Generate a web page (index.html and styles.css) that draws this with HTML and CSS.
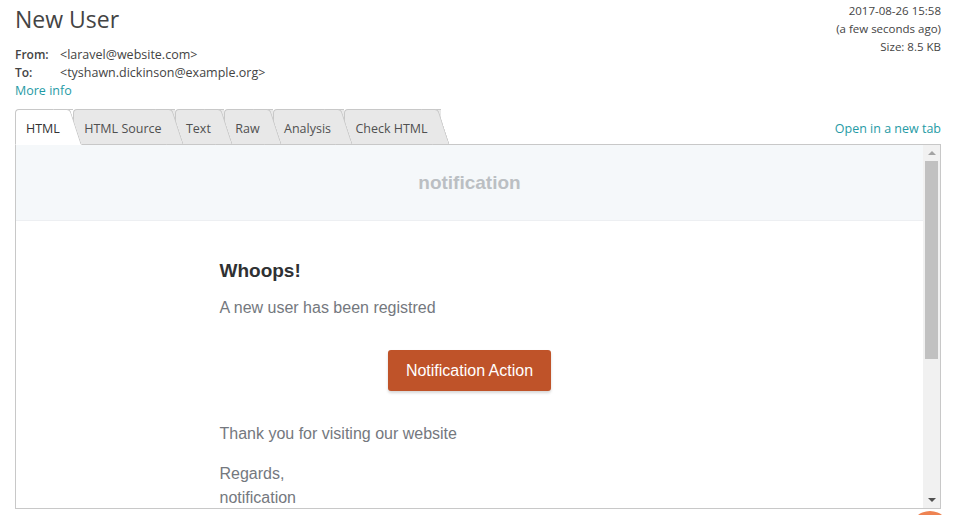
FILE: index.html
```html
<!DOCTYPE html>
<html>
<head>
<meta charset="utf-8">
<link rel="stylesheet" href="styles.css">
</head>
<body>
<div class="page">
  <div class="top">
    <div class="summary">
      <h1 class="title">New User</h1>
      <div class="meta">
        <span class="label">From:</span><span class="value">&lt;laravel@website.com&gt;</span>
        <span class="label">To:</span><span class="value">&lt;tyshawn.dickinson@example.org&gt;</span>
      </div>
      <a class="link" href="#">More info</a>
    </div>
    <div class="stamp">
      <div>2017-08-26 15:58</div>
      <div>(a few seconds ago)</div>
      <div>Size: 8.5 KB</div>
    </div>
  </div>

  <div class="tabbar">
    <div class="tabs">
      <div class="tab active">HTML</div>
      <div class="tab">HTML Source</div>
      <div class="tab">Text</div>
      <div class="tab">Raw</div>
      <div class="tab">Analysis</div>
      <div class="tab">Check HTML</div>
    </div>
    <a class="link newtab" href="#">Open in a new tab</a>
  </div>

  <div class="panel">
    <div class="frame">
      <div class="masthead">notification</div>
      <div class="mailbody">
        <div class="inner">
          <h2 class="whoops">Whoops!</h2>
          <p class="para">A new user has been registred</p>
          <div class="action"><span class="button">Notification Action</span></div>
          <p class="para">Thank you for visiting our website</p>
          <p class="para">Regards,<br>notification</p>
        </div>
      </div>
    </div>
    <div class="scrollbar">
      <div class="sb-btn"><span class="arrow-up"></span></div>
      <div class="sb-thumb"></div>
      <div class="sb-fill"></div>
      <div class="sb-btn"><span class="arrow-down"></span></div>
    </div>
  </div>
</div>
<div class="fab"></div>
</body>
</html>
```

FILE: styles.css
```css
html, body {
  margin: 0;
  padding: 0;
  background: #fff;
  overflow: hidden;
}
body {
  font-family: "Open Sans", "Noto Sans", sans-serif;
  color: #444;
  width: 953px;
  height: 515px;
  position: relative;
}
.page {
  padding: 0 12px 0 15px;
}
.top {
  display: flex;
  justify-content: space-between;
  align-items: flex-start;
}
.title {
  margin: 0;
  padding-top: 3px;
  font-size: 23px;
  font-weight: 400;
  line-height: 32px;
  color: #444;
}
.meta {
  margin-top: 11px;
  display: grid;
  grid-template-columns: 45px auto;
  font-size: 12.5px;
  line-height: 18px;
}
.label {
  font-weight: 600;
  font-size: 12px;
  color: #444;
}
.value {
  color: #444;
}
.link {
  color: #1f9ba5;
  text-decoration: none;
  font-size: 12.5px;
  line-height: 18px;
  display: block;
}
.stamp {
  text-align: right;
  font-size: 11.5px;
  line-height: 18px;
  color: #444;
  padding-top: 2px;
}
.tabbar {
  margin-top: 9px;
  display: flex;
  justify-content: space-between;
  align-items: center;
  position: relative;
  z-index: 2;
  margin-bottom: -1px;
}
.tabs {
  display: flex;
}
.tab {
  position: relative;
  box-sizing: border-box;
  height: 36px;
  display: flex;
  align-items: center;
  padding: 2px 13.4px 0 10px;
  font-size: 12.5px;
  color: #505050;
  background: #e8e8e8;
  border-top: 1px solid #c8c8c8;
  border-left: 1px solid #c8c8c8;
  border-bottom: 1px solid #c8c8c8;
  border-top-left-radius: 4px;
}
.tab::after {
  content: "";
  position: absolute;
  top: -1px;
  bottom: -1px;
  right: -3px;
  width: 16px;
  background: inherit;
  border-top: 1px solid #c8c8c8;
  border-right: 1px solid #c8c8c8;
  border-bottom: 1px solid #c8c8c8;
  border-top-right-radius: 4px;
  transform: skewX(18deg);
  z-index: -1;
}
.tab.active {
  background: #fff;
  color: #333;
  border-bottom-color: #fff;
  z-index: 10;
}
.tab.active::after {
  border-bottom-color: #fff;
}
.tab:nth-child(2) { z-index: 6; }
.tab:nth-child(3) { z-index: 5; }
.tab:nth-child(4) { z-index: 4; }
.tab:nth-child(5) { z-index: 3; }
.tab:nth-child(6) { z-index: 2; }
.newtab {
  font-size: 12.5px;
  padding-top: 3px;
}
.panel {
  box-sizing: border-box;
  height: 365px;
  border: 1px solid #c8c8c8;
  display: flex;
  position: relative;
  z-index: 1;
}
.frame {
  flex: 1;
  overflow: hidden;
  background: #f5f8fa;
  font-family: "Liberation Sans", Arial, sans-serif;
}
.masthead {
  height: 75px;
  display: flex;
  align-items: center;
  justify-content: center;
  font-size: 19px;
  font-weight: bold;
  color: #bbbfc3;
}
.mailbody {
  background: #fff;
  border-top: 1px solid #edeff2;
  height: 400px;
}
.inner {
  width: 570px;
  box-sizing: border-box;
  margin: 0 auto;
  padding: 38px 35px 35px;
}
.whoops {
  margin: 0 0 13px;
  font-size: 19px;
  font-weight: bold;
  color: #2f3133;
  line-height: 24px;
}
.para {
  margin: 0 0 16px;
  font-size: 16px;
  line-height: 24px;
  color: #74787e;
}
.action {
  margin: 30px 0 31px;
  text-align: center;
}
.button {
  display: inline-block;
  background: #bf5329;
  color: #fff;
  font-size: 16px;
  line-height: 21px;
  padding: 10px 18px;
  border-radius: 3px;
  box-shadow: 0 2px 3px rgba(0, 0, 0, 0.16);
}
.scrollbar {
  width: 17px;
  background: #f1f1f1;
  display: flex;
  flex-direction: column;
}
.sb-btn {
  height: 16px;
  display: flex;
  align-items: center;
  justify-content: center;
}
.sb-thumb {
  margin: 0 2px;
  height: 198px;
  background: #c1c1c1;
}
.sb-fill {
  flex: 1;
}
.arrow-up {
  width: 0;
  height: 0;
  border-left: 4px solid transparent;
  border-right: 4px solid transparent;
  border-bottom: 4px solid #a3a3a3;
}
.arrow-down {
  width: 0;
  height: 0;
  border-left: 4px solid transparent;
  border-right: 4px solid transparent;
  border-top: 4px solid #505050;
}
.fab {
  position: absolute;
  left: 910px;
  top: 511px;
  width: 40px;
  height: 40px;
  border-radius: 50%;
  background: #ee8352;
}
```
